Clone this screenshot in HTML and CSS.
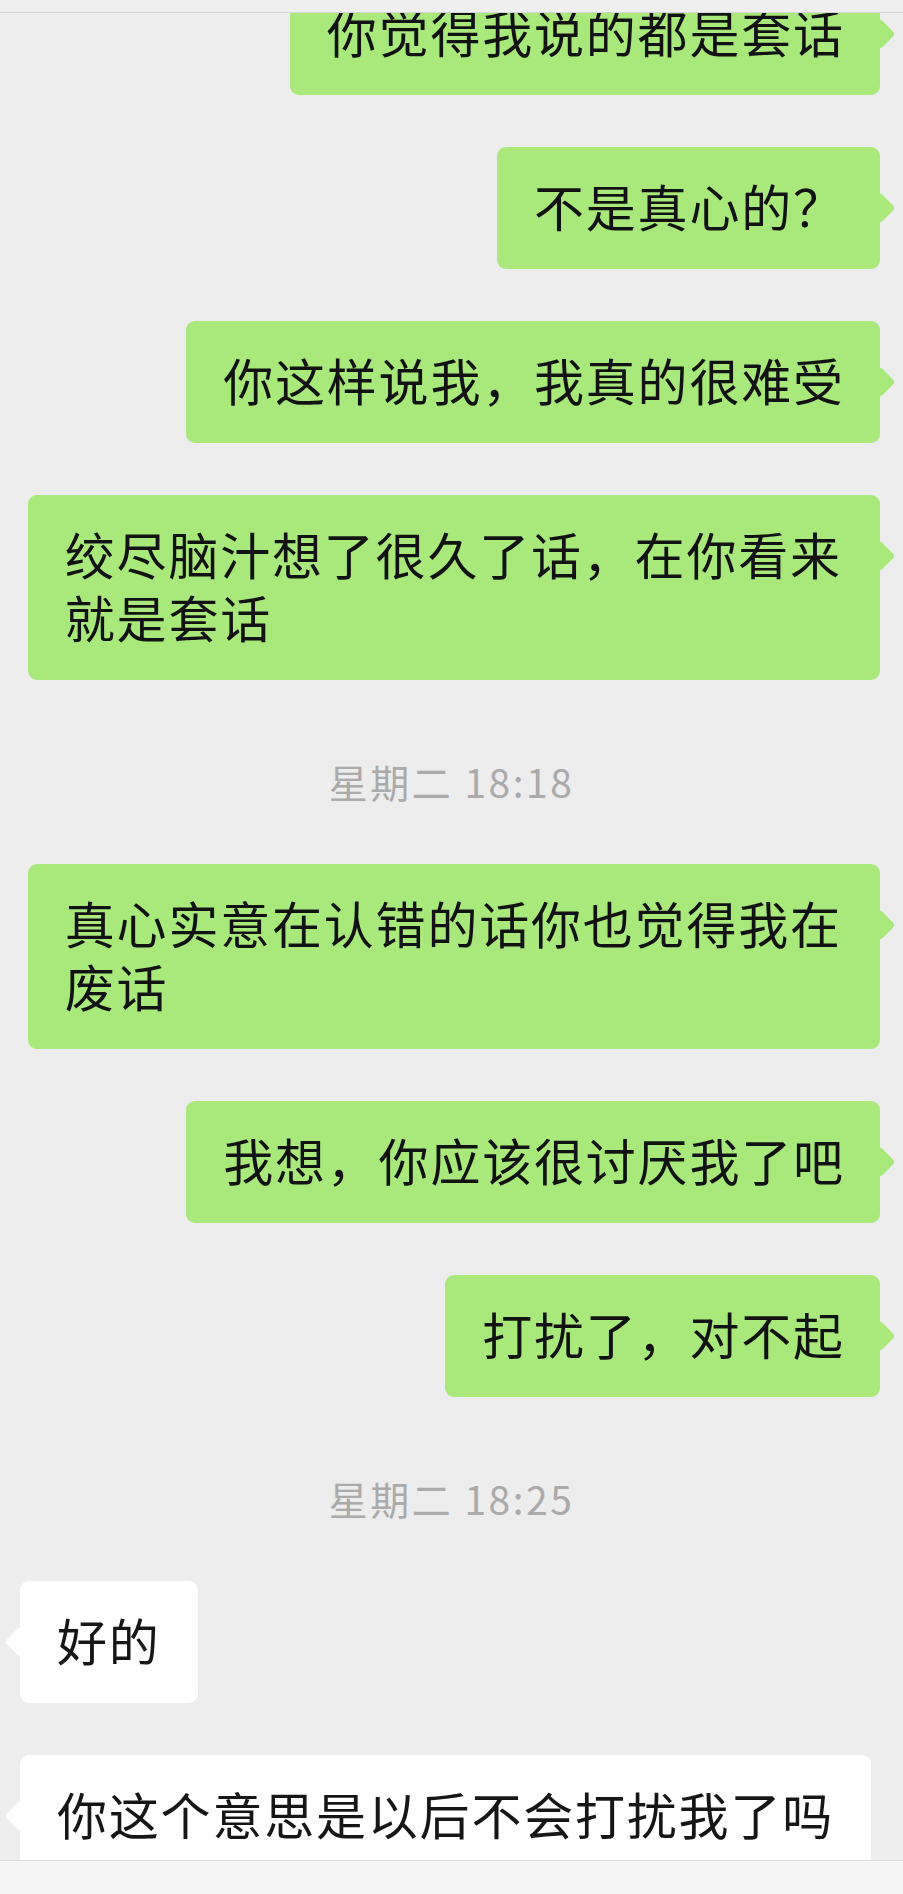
FILE: index.html
```html
<!DOCTYPE html>
<html lang="zh-CN">
<head>
<meta charset="utf-8">
<title>聊天</title>
<link rel="stylesheet" href="styles.css">
</head>
<body>
<div class="screen">
  <div class="topbar"></div>
  <div class="chat">
    <div class="list">
      <div class="row me"><div class="bubble">你觉得我说的都是套话</div></div>
      <div class="row me"><div class="bubble">不是真心的？</div></div>
      <div class="row me"><div class="bubble">你这样说我，我真的很难受</div></div>
      <div class="row me"><div class="bubble">绞尽脑汁想了很久了话，在你看来就是套话</div></div>
      <div class="time">星期二 18:18</div>
      <div class="row me"><div class="bubble">真心实意在认错的话你也觉得我在废话</div></div>
      <div class="row me"><div class="bubble">我想，你应该很讨厌我了吧</div></div>
      <div class="row me"><div class="bubble">打扰了，对不起</div></div>
      <div class="time">星期二 18:25</div>
      <div class="row other"><div class="bubble">好的</div></div>
      <div class="row other"><div class="bubble">你这个意思是以后不会打扰我了吗</div></div>
    </div>
  </div>
  <div class="footer"></div>
</div>
</body>
</html>
```
FILE: styles.css
```css
html, body {
  margin: 0;
  padding: 0;
  background: #ededed;
}

.screen {
  width: 903px;
  height: 1894px;
  display: flex;
  flex-direction: column;
  overflow: hidden;
  font-family: "Noto Sans CJK SC", "Noto Sans", sans-serif;
}

.topbar {
  height: 12px;
  flex: 0 0 12px;
  background: #efefef;
  border-bottom: 1px solid #d6d6d6;
}

.chat {
  flex: 1 1 auto;
  overflow: hidden;
}

.list {
  margin-top: -40px;
  display: flex;
  flex-direction: column;
  gap: 52px;
}

.row {
  display: flex;
}

.row.me {
  justify-content: flex-end;
  padding-right: 23px;
}

.row.other {
  justify-content: flex-start;
  padding-left: 20px;
}

.bubble {
  position: relative;
  max-width: 780px;
  padding: 26.5px 37px 32.5px 37px;
  border-radius: 9px;
  font-size: 50px;
  line-height: 63px;
  letter-spacing: 1.8px;
  color: #121212;
}

.me .bubble {
  background: #a9e97c;
  padding-right: 35.2px;
}

.other .bubble {
  background: #ffffff;
  color: #161616;
}

.bubble::after {
  content: "";
  position: absolute;
  top: 50px;
  width: 22px;
  height: 22px;
  border-radius: 4px;
  transform: rotate(45deg);
}

.me .bubble::after {
  right: -11px;
  background: #a9e97c;
}

.other .bubble::after {
  left: -11px;
  background: #ffffff;
}

.time {
  height: 80px;
  box-sizing: border-box;
  padding-top: 27px;
  text-align: center;
  font-size: 39px;
  line-height: 44px;
  letter-spacing: 2.5px;
  color: #aaaaaa;
}

.footer {
  flex: 0 0 33px;
  height: 33px;
  background: #f5f5f5;
  border-top: 1px solid #dadada;
}
```
